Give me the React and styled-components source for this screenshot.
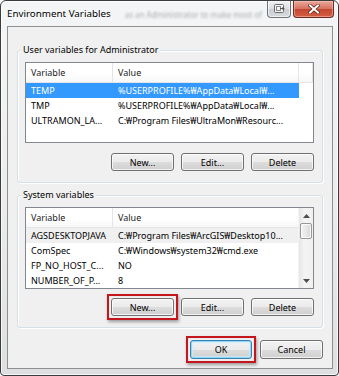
import React from 'react';
import styled, { createGlobalStyle, css } from 'styled-components';

const GlobalStyle = createGlobalStyle`
  html, body {
    margin: 0;
    padding: 0;
    background: #ffffff;
    overflow: hidden;
  }
  body {
    font-family: 'Noto Sans', 'Liberation Sans', sans-serif;
    font-size: 9px;
    color: #000;
  }
  * {
    box-sizing: border-box;
  }
`;

const Window = styled.div`
  width: 339px;
  height: 376px;
  border: 1px solid #3c3c3c;
  border-radius: 6px 6px 4px 4px;
  background: linear-gradient(to bottom, #f4f5f6 0%, #eceef0 45%, #dedfe1 100%);
  box-shadow: inset 0 0 0 1px rgba(255, 255, 255, 0.75);
  display: flex;
  flex-direction: column;
  padding: 0 5px 6px 6px;
`;

const TitleBar = styled.div`
  height: 25px;
  display: flex;
  align-items: flex-start;
`;

const Title = styled.div`
  font-size: 9.8px;
  line-height: 26px;
  color: #000;
  text-shadow: 0 0 6px #fff, 0 0 3px #fff;
  white-space: nowrap;
`;

const GlassText = styled.div`
  flex: 1;
  min-width: 0;
  white-space: nowrap;
  margin-left: 14px;
  line-height: 28px;
  font-size: 8px;
  color: rgba(60, 60, 60, 0.4);
  filter: blur(1.3px);
`;

const CaptionButtons = styled.div`
  display: flex;
  gap: 2px;
  margin-right: -1px;
`;

const CaptionButton = styled.div`
  height: 17px;
  width: ${p => p.$w}px;
  display: flex;
  align-items: center;
  justify-content: center;
  border: 1px solid #6f7479;
  border-top: none;
  border-radius: 0 0 4px 4px;
  background: linear-gradient(to bottom, #eef0f2 0%, #dcdfe2 50%, #c9cdd1 51%, #d8dbde 100%);
  box-shadow: inset 0 0 0 1px rgba(255, 255, 255, 0.6);
  ${p => p.$close && css`
    border-color: #6b2a22;
    background: linear-gradient(to bottom, #e9a99b 0%, #d7705e 50%, #c44631 51%, #d35f44 100%);
    box-shadow: inset 0 0 0 1px rgba(255, 200, 190, 0.5);
  `}
`;

const Client = styled.div`
  flex: 1;
  background: #f0f0f0;
  border: 1px solid #8e8f8f;
  padding: 23px 9px 8px 9px;
  display: flex;
  flex-direction: column;
  gap: 12px;
`;

const GroupBox = styled.div`
  position: relative;
  border: 1px solid #d5dfe5;
  border-radius: 3px;
  box-shadow: inset 1px 1px 0 #fff, 1px 1px 0 #fff;
  padding: 11px 8px 11px 7px;
  display: flex;
  flex-direction: column;
  gap: ${p => p.$gap}px;
`;

const Legend = styled.span`
  position: absolute;
  top: -8px;
  left: 3px;
  padding: 0 2px;
  background: #f0f0f0;
  line-height: 14px;
  color: #000;
`;

const ListView = styled.div`
  height: ${p => p.$h}px;
  border: 1px solid #828790;
  background: #fff;
  display: flex;
  overflow: hidden;
`;

const ListBody = styled.div`
  flex: 1;
  min-width: 0;
  display: flex;
  flex-direction: column;
`;

const HeaderRow = styled.div`
  height: 20px;
  display: flex;
  border-bottom: 1px solid #e5e5e5;
  background: linear-gradient(to bottom, #ffffff 0%, #ffffff 55%, #f6f7f8 100%);
`;

const HeaderCell = styled.div`
  width: ${p => (p.$w ? `${p.$w}px` : 'auto')};
  flex: ${p => (p.$w ? 'none' : '1')};
  border-right: 1px solid #e3e5e8;
  padding-left: 5px;
  line-height: 20px;
  color: #1c1c1c;
  white-space: nowrap;
`;

const Row = styled.div`
  height: 15px;
  display: flex;
  align-self: flex-start;
  ${p => p.$selected && css`
    background: #3399ff;
    color: #fff;
  `}
  ${p => p.$inactive && css`
    background: #f0f0f0;
  `}
`;

const Cell = styled.div`
  width: ${p => p.$w}px;
  padding-left: 5px;
  line-height: 16px;
  white-space: nowrap;
  overflow: hidden;
`;

const ScrollBar = styled.div`
  width: 15px;
  display: flex;
  flex-direction: column;
  background: linear-gradient(to right, #e6e6e6 0%, #f4f4f4 40%, #f0f0f0 100%);
  border-left: 1px solid #f3f3f3;
`;

const ArrowButton = styled.div`
  height: 15px;
  display: flex;
  align-items: center;
  justify-content: center;
`;

const Thumb = styled.div`
  height: 16px;
  margin: 0 1px;
  border: 1px solid #979797;
  border-radius: 2px;
  background: linear-gradient(to right, #f3f3f3 0%, #e8e8e8 50%, #d6d6d6 100%);
  box-shadow: inset 0 0 0 1px rgba(255, 255, 255, 0.8);
`;

const Track = styled.div`
  flex: 1;
`;

const ButtonRow = styled.div`
  display: flex;
  justify-content: flex-end;
  gap: 7px;
`;

const Button = styled.button`
  position: relative;
  width: ${p => p.$w || 63}px;
  height: ${p => p.$h || 18}px;
  padding: 0;
  font: inherit;
  color: #000;
  border: 1px solid #707070;
  border-radius: 3px;
  background: linear-gradient(to bottom, #f2f2f2 0%, #ebebeb 50%, #dddddd 51%, #cfcfcf 100%);
  box-shadow: inset 0 0 0 1px rgba(255, 255, 255, 0.75);
  ${p => p.$focused && css`
    border-color: #3c7fb1;
    box-shadow: inset 0 0 0 1px #8fd8f8, inset 0 0 0 2px rgba(200, 240, 255, 0.6);
  `}
  ${p => p.$marked && css`
    &::after {
      content: '';
      position: absolute;
      top: -5px;
      left: -5px;
      right: -5px;
      bottom: -5px;
      border: 2px solid #c4161c;
      box-shadow: 1px 2px 3px rgba(0, 0, 0, 0.35), inset 0 0 1px rgba(0, 0, 0, 0.2);
    }
  `}
`;

const BottomRow = styled(ButtonRow)`
  gap: 8px;
`;

const COLS = [87, 186];

const userVars = [
  ['TEMP', '%USERPROFILE%₩AppData₩Local₩...'],
  ['TMP', '%USERPROFILE%₩AppData₩Local₩...'],
  ['ULTRAMON_LA...', 'C:₩Program Files₩UltraMon₩Resourc...'],
];

const systemVars = [
  ['AGSDESKTOPJAVA', 'C:₩Program Files₩ArcGIS₩Desktop10...'],
  ['ComSpec', 'C:₩Windows₩system32₩cmd.exe'],
  ['FP_NO_HOST_C...', 'NO'],
  ['NUMBER_OF_P...', '8'],
];

function MoveIcon() {
  return (
    <svg width="11" height="10" viewBox="0 0 11 10">
      <rect x="0.5" y="0.5" width="9" height="8" rx="1" fill="#f4f4f4" stroke="#6a6a6a" />
      <rect x="2.5" y="2.5" width="4" height="4" fill="none" stroke="#8a8a8a" />
      <path d="M6 4.5h4M8.5 3l1.5 1.5L8.5 6" fill="none" stroke="#555" />
    </svg>
  );
}

function CloseIcon() {
  return (
    <svg width="12" height="10" viewBox="0 0 12 10">
      <path d="M2 1.5l8 7M10 1.5l-8 7" stroke="#5a2018" strokeWidth="3.4" strokeLinecap="square" />
      <path d="M2 1.5l8 7M10 1.5l-8 7" stroke="#ffffff" strokeWidth="2" strokeLinecap="square" />
    </svg>
  );
}

function Arrow({ up }) {
  return (
    <svg width="7" height="4" viewBox="0 0 7 4">
      <path d={up ? 'M0 4L3.5 0L7 4Z' : 'M0 0L3.5 4L7 0Z'} fill="#4d4d4d" />
    </svg>
  );
}

function VarList({ rows, height, selected, inactive, scroll }) {
  return (
    <ListView $h={height}>
      <ListBody>
        <HeaderRow>
          <HeaderCell $w={COLS[0]}>Variable</HeaderCell>
          <HeaderCell $w={COLS[1]}>Value</HeaderCell>
          {!scroll && <HeaderCell />}
        </HeaderRow>
        {rows.map(([name, value], i) => (
          <Row key={name} $selected={i === selected} $inactive={i === inactive}>
            <Cell $w={COLS[0]}>{name}</Cell>
            <Cell $w={COLS[1]}>{value}</Cell>
          </Row>
        ))}
      </ListBody>
      {scroll && (
        <ScrollBar>
          <ArrowButton><Arrow up /></ArrowButton>
          <Thumb />
          <Track />
          <ArrowButton><Arrow /></ArrowButton>
        </ScrollBar>
      )}
    </ListView>
  );
}

export default function App() {
  return (
    <>
      <GlobalStyle />
      <Window>
        <TitleBar>
          <Title>Environment Variables</Title>
          <GlassText>as an Administrator to make most of</GlassText>
          <CaptionButtons>
            <CaptionButton $w={24}><MoveIcon /></CaptionButton>
            <CaptionButton $w={41} $close><CloseIcon /></CaptionButton>
          </CaptionButtons>
        </TitleBar>
        <Client>
          <GroupBox $gap={10}>
            <Legend>User variables for Administrator</Legend>
            <VarList rows={userVars} height={81} selected={0} />
            <ButtonRow>
              <Button>New...</Button>
              <Button>Edit...</Button>
              <Button>Delete</Button>
            </ButtonRow>
          </GroupBox>
          <GroupBox $gap={9}>
            <Legend>System variables</Legend>
            <VarList rows={systemVars} height={82} inactive={0} scroll />
            <ButtonRow>
              <Button $marked>New...</Button>
              <Button>Edit...</Button>
              <Button>Delete</Button>
            </ButtonRow>
          </GroupBox>
          <BottomRow>
            <Button $w={62} $h={19} $focused $marked>OK</Button>
            <Button $w={63} $h={19}>Cancel</Button>
          </BottomRow>
        </Client>
      </Window>
    </>
  );
}
